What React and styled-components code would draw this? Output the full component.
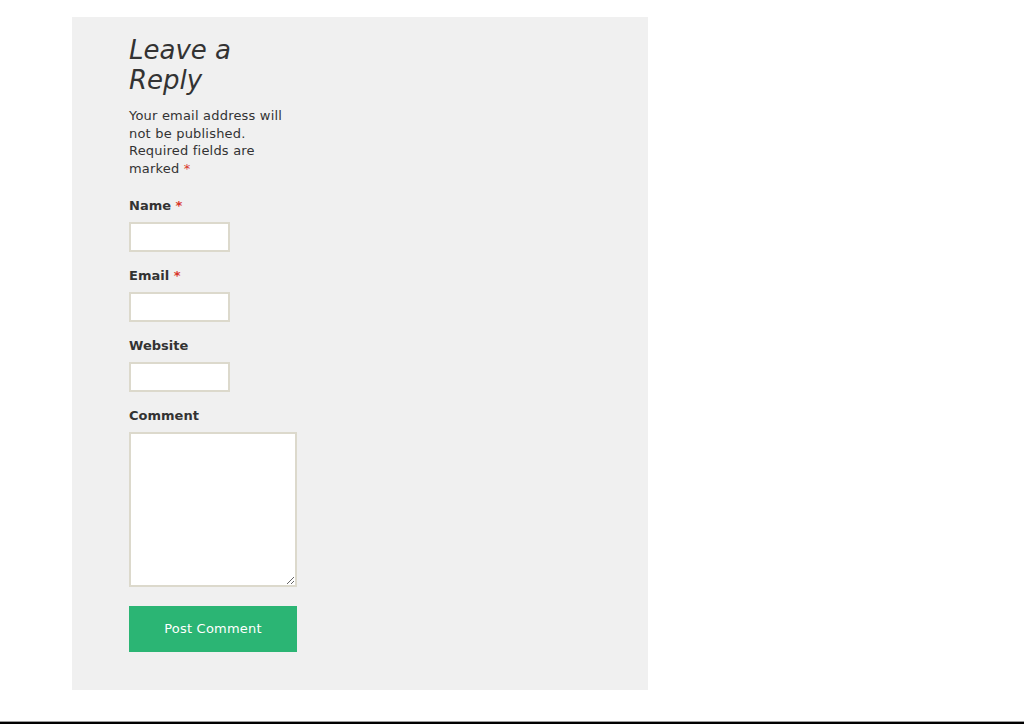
import React from "react";
import styled, { createGlobalStyle } from "styled-components";

const Global = createGlobalStyle`
  html, body {
    margin: 0;
    padding: 0;
    background: #fff;
  }
  * {
    box-sizing: border-box;
  }
`;

export default function App() {
  return (
    <Page>
      <Global />
      <Panel>
        <Column>
          <Title>Leave a Reply</Title>
          <Notes>
            Your email address will not be published. Required fields are
            marked <Star>*</Star>
          </Notes>
          <Field>
            <Label>
              Name <Star>*</Star>
            </Label>
            <Input type="text" />
          </Field>
          <Field>
            <Label>
              Email <Star>*</Star>
            </Label>
            <Input type="email" />
          </Field>
          <Field>
            <Label>Website</Label>
            <Input type="url" />
          </Field>
          <Field>
            <Label>Comment</Label>
            <TextArea />
          </Field>
          <Button type="button">Post Comment</Button>
        </Column>
      </Panel>
      <BottomBar />
    </Page>
  );
}

const Page = styled.div`
  height: 724px;
  display: flex;
  flex-direction: column;
  align-items: flex-start;
  font-family: "DejaVu Sans", Verdana, sans-serif;
  color: #333;
`;

const Panel = styled.div`
  margin: 17px 0 0 72px;
  width: 576px;
  background: #f0f0f0;
  padding: 18px 0 38px 57px;
`;

const Column = styled.div`
  width: 168px;
  display: flex;
  flex-direction: column;
`;

const Title = styled.h3`
  margin: 0;
  font-size: 26px;
  line-height: 30px;
  font-style: italic;
  font-weight: normal;
  color: #333;
`;

const Notes = styled.p`
  margin: 12px 0 0;
  font-size: 13px;
  line-height: 17.7px;
  letter-spacing: 0.2px;
`;

const Star = styled.span`
  color: #d8362a;
`;

const Field = styled.div`
  margin-top: 18px;
  display: flex;
  flex-direction: column;
  gap: 7px;
  & + & {
    margin-top: 14px;
  }
`;

const Label = styled.label`
  padding-top: 1px;
  font-size: 13px;
  line-height: 18px;
  font-weight: bold;
  color: #333;
`;

const Input = styled.input`
  width: 101px;
  height: 30px;
  border: 2px solid #dcd9cc;
  background: #fff;
  padding: 4px;
  font: inherit;
  outline: none;
`;

const TextArea = styled.textarea`
  width: 168px;
  height: 155px;
  border: 2px solid #dcd9cc;
  background: #fff;
  padding: 4px;
  font: inherit;
  outline: none;
`;

const Button = styled.button`
  margin-top: 19px;
  width: 168px;
  height: 46px;
  border: none;
  background: #2bb574;
  color: #fff;
  font-family: "DejaVu Sans", Verdana, sans-serif;
  font-size: 13px;
  letter-spacing: 0.2px;
  cursor: pointer;
`;

const BottomBar = styled.div`
  margin-top: auto;
  width: 100%;
  height: 3px;
  background: #000;
  border-top: 1px solid #9a9a9a;
`;
